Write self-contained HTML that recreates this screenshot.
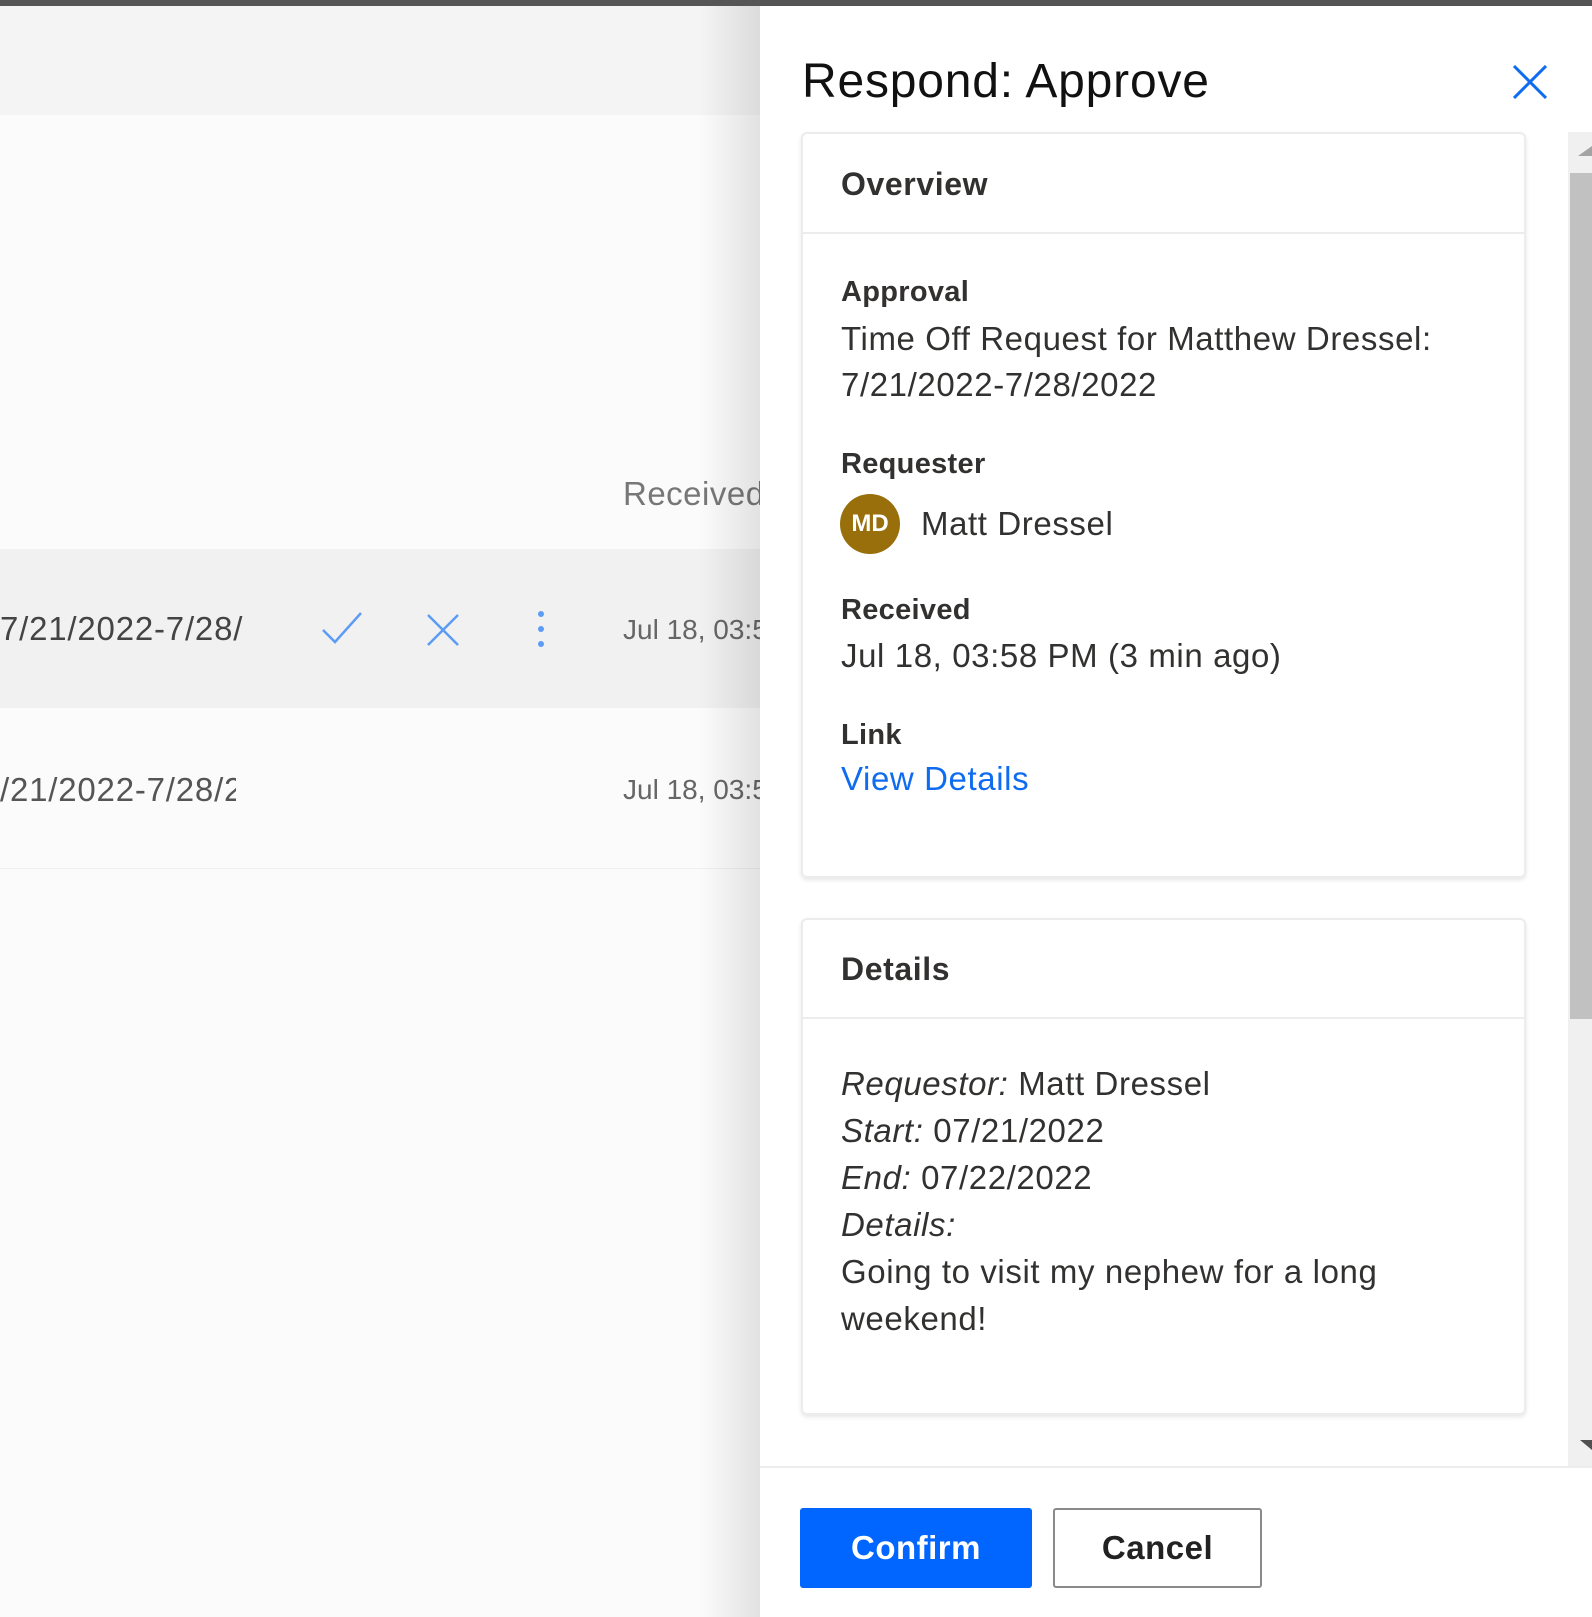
<!DOCTYPE html>
<html><head><style>
*{margin:0;padding:0;box-sizing:border-box}
body{width:1592px;height:1617px;overflow:hidden;position:relative;background:#fafafa;font-family:"Liberation Sans",sans-serif;color:#323130}
.abs{position:absolute;white-space:nowrap}
.lbl{font-size:29px;font-weight:bold;color:#323130;letter-spacing:0.3px}
.val{font-size:33px;color:#323130;letter-spacing:0.6px}
</style></head><body>
<div class="abs" style="left:0;top:0;width:1592px;height:6px;background:#555"></div>
<div class="abs" style="left:0;top:6px;width:760px;height:109px;background:#f4f4f4"></div>
<div class="abs" style="left:0;top:115px;width:760px;height:1502px;background:#fbfbfb"></div>
<div class="abs" style="left:623px;top:475px;font-size:33px;color:#777;letter-spacing:0.5px">Received</div>
<div class="abs" style="left:0;top:549px;width:760px;height:159px;background:#f1f1f1"></div>
<div class="abs" style="left:0;top:610px;font-size:33px;color:#444;width:243px;overflow:hidden;font-weight:500;letter-spacing:0.8px">7/21/2022-7/28/2022</div>
<svg class="abs" style="left:320px;top:610px" width="44" height="36"><path d="M3 20 L15 32 L41 3" stroke="#5c9cf5" stroke-width="2.5" fill="none"/></svg>
<svg class="abs" style="left:426px;top:613px" width="34" height="34"><path d="M2 2 L32 32 M32 2 L2 32" stroke="#5c9cf5" stroke-width="2.5"/></svg>
<svg class="abs" style="left:537px;top:610px" width="8" height="40"><circle cx="4" cy="4" r="3" fill="#5c9cf5"/><circle cx="4" cy="19" r="3" fill="#5c9cf5"/><circle cx="4" cy="34" r="3" fill="#5c9cf5"/></svg>
<div class="abs" style="left:623px;top:614px;font-size:28px;color:#666">Jul 18, 03:58</div>
<div class="abs" style="left:0;top:771px;font-size:33px;color:#555;width:236px;overflow:hidden;letter-spacing:0.8px">/21/2022-7/28/2022</div>
<div class="abs" style="left:623px;top:774px;font-size:28px;color:#666">Jul 18, 03:58</div>
<div class="abs" style="left:0;top:868px;width:760px;height:1px;background:#eee"></div>
<div class="abs" style="left:700px;top:6px;width:60px;height:1611px;background:linear-gradient(to right,rgba(0,0,0,0),rgba(0,0,0,0.1))"></div>

<div class="abs" style="left:760px;top:6px;width:832px;height:1611px;background:#fff"></div>
<div class="abs" style="left:802px;top:54px;font-size:48px;color:#111;letter-spacing:0.8px;font-weight:500">Respond: Approve</div>
<svg class="abs" style="left:1513px;top:65px" width="34" height="34"><path d="M1 1 L33 33 M33 1 L1 33" stroke="#0f6cf0" stroke-width="3"/></svg>

<div class="abs" style="left:1568px;top:132px;width:24px;height:1334px;background:#f0f0f0"></div>
<div class="abs" style="left:1570px;top:173px;width:22px;height:846px;background:#c1c1c1"></div>
<svg class="abs" style="left:1578px;top:146px" width="14" height="10"><path d="M0 10 L14 10 L14 0 Z" fill="#a3a3a3"/></svg>
<svg class="abs" style="left:1580px;top:1440px" width="12" height="10"><path d="M0 0 L12 0 L12 10 Z" fill="#505050"/></svg>

<div class="abs" style="left:801px;top:132px;width:725px;height:746px;border:2px solid #ececec;border-radius:6px;box-shadow:0 2px 4px rgba(0,0,0,0.1)"></div>
<div class="abs" style="left:841px;top:166px;font-size:32px;font-weight:bold;letter-spacing:0.6px">Overview</div>
<div class="abs" style="left:803px;top:232px;width:721px;height:2px;background:#ececec"></div>
<div class="abs lbl" style="left:841px;top:276px">Approval</div>
<div class="abs val" style="left:841px;top:316px;line-height:46px">Time Off Request for Matthew Dressel:<br>7/21/2022-7/28/2022</div>
<div class="abs lbl" style="left:841px;top:448px">Requester</div>
<div class="abs" style="left:840px;top:494px;width:60px;height:60px;border-radius:50%;background:#986f0b;color:#fff;font-weight:bold;font-size:24px;line-height:60px;text-align:center">MD</div>
<div class="abs val" style="left:921px;top:505px">Matt Dressel</div>
<div class="abs lbl" style="left:841px;top:594px">Received</div>
<div class="abs val" style="left:841px;top:637px">Jul 18, 03:58 PM (3 min ago)</div>
<div class="abs lbl" style="left:841px;top:719px">Link</div>
<div class="abs val" style="left:841px;top:760px;color:#0f6cf0">View Details</div>

<div class="abs" style="left:801px;top:918px;width:725px;height:497px;border:2px solid #ececec;border-radius:6px;box-shadow:0 2px 4px rgba(0,0,0,0.1)"></div>
<div class="abs" style="left:841px;top:951px;font-size:32px;font-weight:bold;letter-spacing:0.6px">Details</div>
<div class="abs" style="left:803px;top:1017px;width:721px;height:2px;background:#ececec"></div>
<div class="abs val" style="left:841px;top:1060px;line-height:47px"><i>Requestor:</i> Matt Dressel<br><i>Start:</i> 07/21/2022<br><i>End:</i> 07/22/2022<br><i>Details:</i><br>Going to visit my nephew for a long<br>weekend!</div>

<div class="abs" style="left:760px;top:1466px;width:832px;height:2px;background:#ececec"></div>
<div class="abs" style="left:800px;top:1508px;width:232px;height:80px;background:#0066ff;border-radius:3px;color:#fff;font-size:33px;font-weight:bold;line-height:80px;text-align:center;letter-spacing:0.5px">Confirm</div>
<div class="abs" style="left:1053px;top:1508px;width:209px;height:80px;border:2px solid #8a8a8a;border-radius:3px;color:#222;font-size:33px;font-weight:bold;line-height:76px;text-align:center;letter-spacing:0.5px">Cancel</div>
</body></html>
